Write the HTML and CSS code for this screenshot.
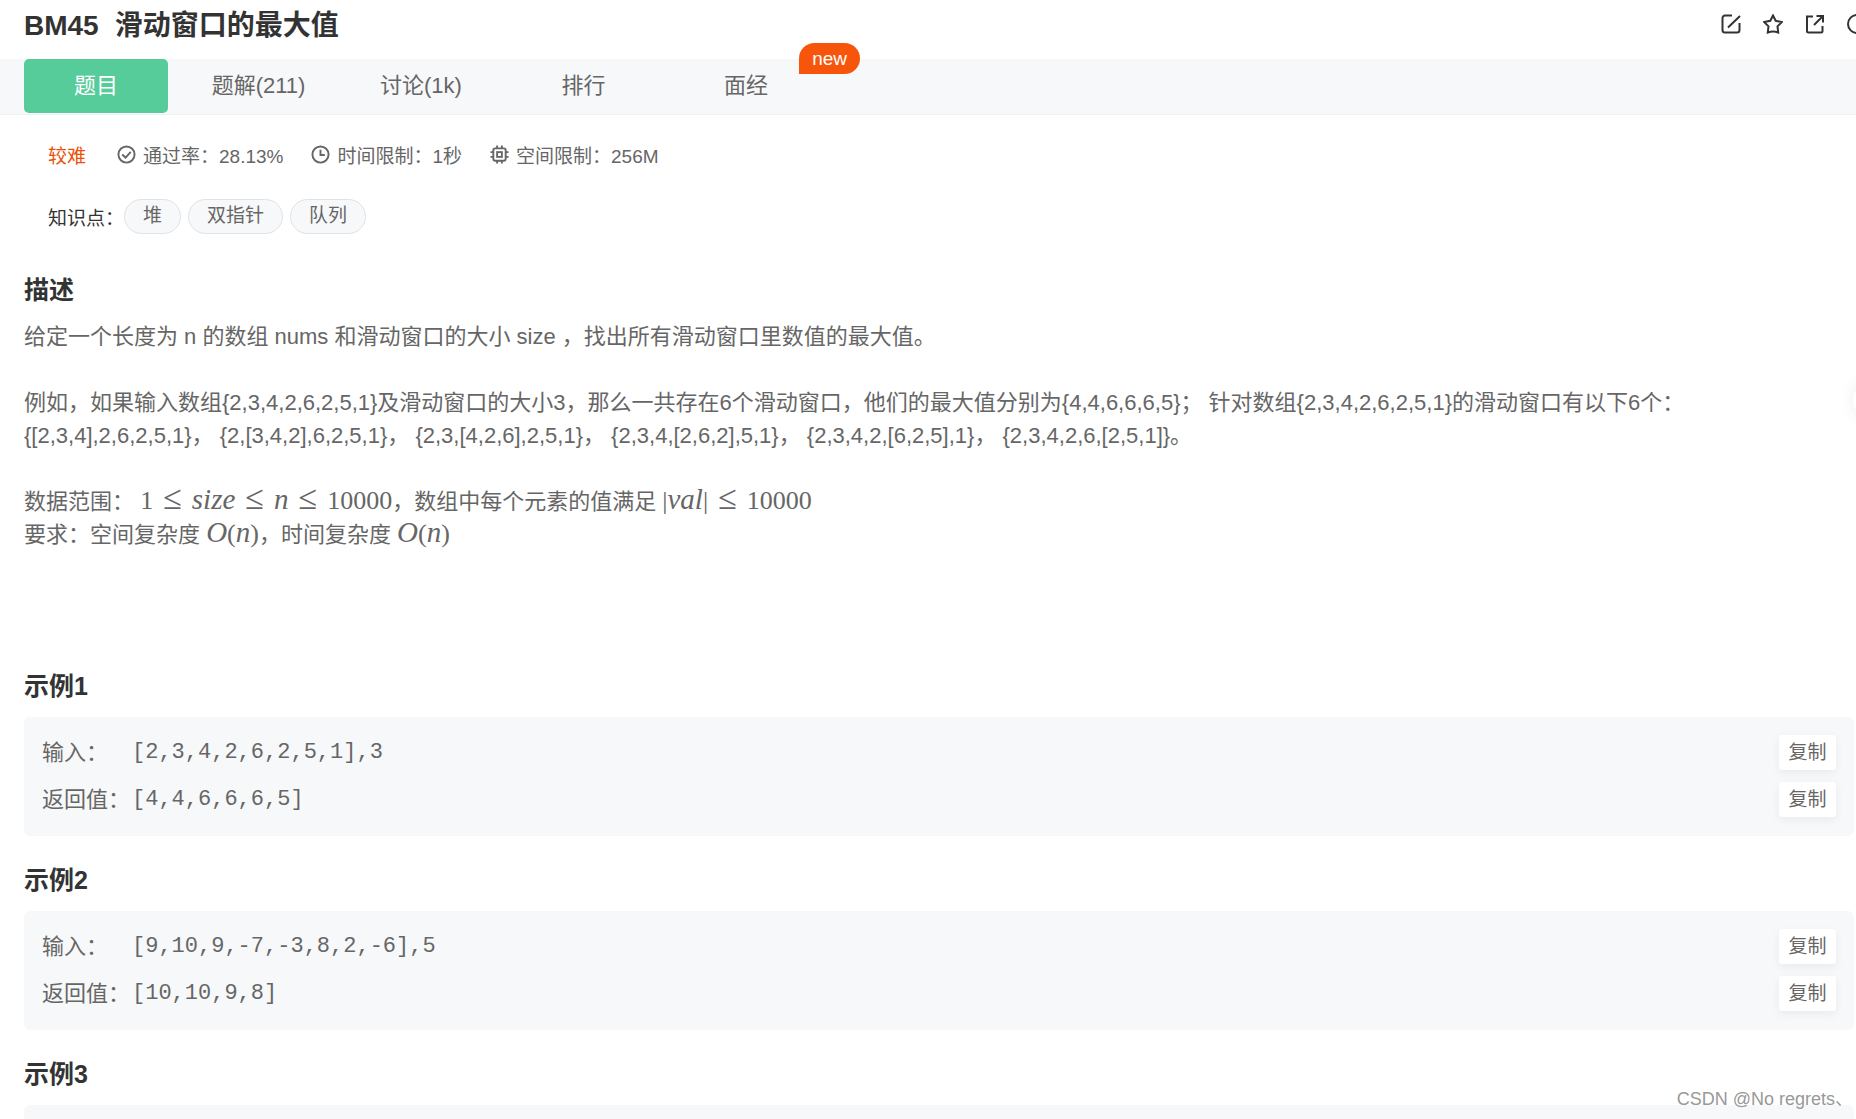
FILE: index.html
```html
<!DOCTYPE html>
<html lang="zh-CN">
<head>
<meta charset="utf-8">
<title>BM45 滑动窗口的最大值</title>
<link rel="stylesheet" href="styles.css">
</head>
<body>
<header class="header">
  <h1 class="title"><span>BM45</span><span>滑动窗口的最大值</span></h1>
  <div class="actions">
    <button class="icon-btn" aria-label="编辑"><svg viewBox="0 0 20 20"><path d="M11 1.500H4A2.500 2.500 0 0 0 1.500 4v12A2.500 2.500 0 0 0 4 18.500h12a2.500 2.500 0 0 0 2.500-2.500V9M7 13.500 19 2"/></svg></button>
    <button class="icon-btn" aria-label="收藏"><svg viewBox="0 0 20 20"><path d="M10 1.500l2.700 5.300 6.100 1.300-4.300 4.200.7 6.200q-5.200-2-10.400 0l.7-6.200L1.200 8.100l6.100-1.300z"/></svg></button>
    <button class="icon-btn" aria-label="分享"><svg viewBox="0 0 20 20"><path d="M8 2.500H2V17q0 1.500 1.500 1.500H16q1.500 0 1.500-1.500v-5M9 11l9-9M11.500 2H18v6.500"/></svg></button>
    <button class="icon-btn" aria-label="帮助"><svg viewBox="0 0 20 20"><circle cx="10" cy="10" r="9"/><path d="M10 14v1"/></svg></button>
  </div>
</header>
<nav class="tabs">
  <div class="tab-list">
    <a class="tab active" href="#">题目</a>
    <a class="tab" href="#">题解(211)</a>
    <a class="tab" href="#">讨论(1k)</a>
    <a class="tab" href="#">排行</a>
    <a class="tab" href="#">面经<span class="badge">new</span></a>
  </div>
</nav>
<main class="content">
  <div class="meta">
    <span class="level">较难</span>
    <span class="meta-item"><svg viewBox="0 0 20 20"><circle cx="10" cy="10" r="8.500"/><path d="M5.500 10l3.500 3.200 5.500-6"/></svg>通过率：28.13%</span>
    <span class="meta-item"><svg viewBox="0 0 20 20"><circle cx="10" cy="10" r="8.500"/><path d="M10 5v5.500h4.500"/></svg>时间限制：1秒</span>
    <span class="meta-item"><svg viewBox="0 0 20 20"><rect x="3.500" y="3.500" width="13" height="13" rx="2"/><rect x="7.500" y="7.500" width="5" height="5"/><path d="M7.500 .5v3M12.500 .5v3M7.500 16.500v3M12.500 16.500v3M.5 7.500h3M.5 12.500h3M16.500 7.500h3M16.500 12.500h3"/></svg>空间限制：256M</span>
  </div>
  <div class="topics">
    <span class="topics-label">知识点：</span>
    <a class="topic" href="#">堆</a>
    <a class="topic" href="#">双指针</a>
    <a class="topic" href="#">队列</a>
  </div>
  <section class="description">
    <h2 class="heading">描述</h2>
    <p>给定一个长度为 n 的数组 nums 和滑动窗口的大小 size ，找出所有滑动窗口里数值的最大值。</p>
    <p>例如，如果输入数组{2,3,4,2,6,2,5,1}及滑动窗口的大小3，那么一共存在6个滑动窗口，他们的最大值分别为{4,4,6,6,6,5}； 针对数组{2,3,4,2,6,2,5,1}的滑动窗口有以下6个：<br>{[2,3,4],2,6,2,5,1}， {2,[3,4,2],6,2,5,1}， {2,3,[4,2,6],2,5,1}， {2,3,4,[2,6,2],5,1}， {2,3,4,2,[6,2,5],1}， {2,3,4,2,6,[2,5,1]}。</p>
    <p>数据范围： <span class="math">1<span class="rel">≤</span><i>size</i><span class="rel">≤</span><i>n</i><span class="rel">≤</span>10000</span>，数组中每个元素的值满足 <span class="math">|<i>val</i>|<span class="rel">≤</span>10000</span><br>要求：空间复杂度 <span class="math"><i>O</i>(<i>n</i>)</span>，时间复杂度 <span class="math"><i>O</i>(<i>n</i>)</span></p>
  </section>
  <section class="example">
    <h2 class="heading">示例1</h2>
    <div class="sample">
      <div class="row"><span class="label">输入：</span><code>[2,3,4,2,6,2,5,1],3</code><button class="copy">复制</button></div>
      <div class="row"><span class="label">返回值：</span><code>[4,4,6,6,6,5]</code><button class="copy">复制</button></div>
    </div>
  </section>
  <section class="example">
    <h2 class="heading">示例2</h2>
    <div class="sample">
      <div class="row"><span class="label">输入：</span><code>[9,10,9,-7,-3,8,2,-6],5</code><button class="copy">复制</button></div>
      <div class="row"><span class="label">返回值：</span><code>[10,10,9,8]</code><button class="copy">复制</button></div>
    </div>
  </section>
  <section class="example">
    <h2 class="heading">示例3</h2>
    <div class="sample"></div>
  </section>
</main>
<button class="drawer" aria-label="展开"></button>
<div class="watermark">CSDN @No regrets、</div>
</body>
</html>
```
FILE: styles.css
```css
* { box-sizing: border-box; }
body {
  margin: 0;
  height: 100vh;
  overflow: hidden;
  position: relative;
  background: #fff;
  color: #666;
  font-family: "Liberation Sans", "Noto Sans CJK SC", sans-serif;
  font-size: 22px;
  line-height: 33px;
}
h1, h2, p { margin: 0; }
a { color: inherit; text-decoration: none; }
button { border: 0; padding: 0; font: inherit; color: inherit; background: none; }
svg { display: block; fill: none; stroke: currentColor; stroke-width: 2; }

.header {
  display: flex;
  justify-content: space-between;
  height: 59px;
  padding-left: 24px;
  color: #333;
}
.title { display: flex; gap: 16px; font-size: 28px; line-height: 52px; }
.actions { display: flex; gap: 22px; padding-top: 14px; margin-right: -11px; }
.icon-btn { width: 20px; height: 20px; }
.icon-btn svg { width: 20px; height: 20px; }

.tabs {
  height: 56px;
  padding-left: 24px;
  background: #f7f8fa;
  border-bottom: 1px solid #f0f1f4;
}
.tab-list { display: flex; justify-content: space-between; width: 794px; }
.tab {
  position: relative;
  width: 144px;
  border-radius: 5px;
  line-height: 54px;
  text-align: center;
}
.active { background: #57cc9b; color: #fff; }
.badge {
  position: absolute;
  top: -16px;
  right: -42px;
  padding: 0 13px;
  border-radius: 16px 16px 16px 0;
  background: #f7550b;
  color: #fff;
  font-size: 19px;
  line-height: 31px;
}

.content { padding: 25px 2px 0 24px; }
.meta, .topics { display: flex; padding-left: 24px; font-size: 19px; }
.meta { gap: 28px; }
.level { width: 41px; color: #eb5007; }
.meta-item { display: flex; gap: 7px; }
.meta-item svg { width: 19px; height: 19px; margin-top: 5px; }
.topics { gap: 7px; padding-top: 26px; }
.topics-label { width: 69px; color: #333; line-height: 40px; white-space: nowrap; }
.topic {
  height: 35px;
  padding: 0 18px;
  border: 1px solid #e0e2e5;
  border-radius: 18px;
  background: #f7f8fa;
  line-height: 31px;
}

.heading { color: #333; font-size: 25px; line-height: 38px; }
.description { padding: 32px 0 83px; }
.description p { padding-bottom: 33px; }
.description .heading { padding-bottom: 11px; }
.math { font-family: "Liberation Serif", serif; font-size: 26px; line-height: 24px; }
.math i { font-size: 29px; }
.rel { margin: 0 10px; font-size: 34px; line-height: 20px; }

.example { padding-bottom: 25px; }
.sample {
  min-height: 119px;
  margin-top: 12px;
  padding: 12px 18px 13px;
  border-radius: 6px;
  background: #f7f8fa;
}
.row { display: flex; align-items: center; height: 47px; }
.label { width: 90px; }
code { flex: 1; font-family: "Liberation Mono", monospace; }
.copy {
  width: 57px;
  height: 35px;
  border-radius: 3px;
  background: #fff;
  box-shadow: 0 3px 10px rgba(0, 0, 0, .06);
  font-size: 19px;
}

.drawer {
  position: absolute;
  top: 380px;
  right: -37px;
  width: 40px;
  height: 40px;
  border-radius: 50%;
  background: #fff;
  box-shadow: 0 0 16px rgba(0, 0, 0, .08);
}
.watermark {
  position: absolute;
  right: 3px;
  bottom: 3px;
  color: #999;
  font-size: 18px;
}
```
